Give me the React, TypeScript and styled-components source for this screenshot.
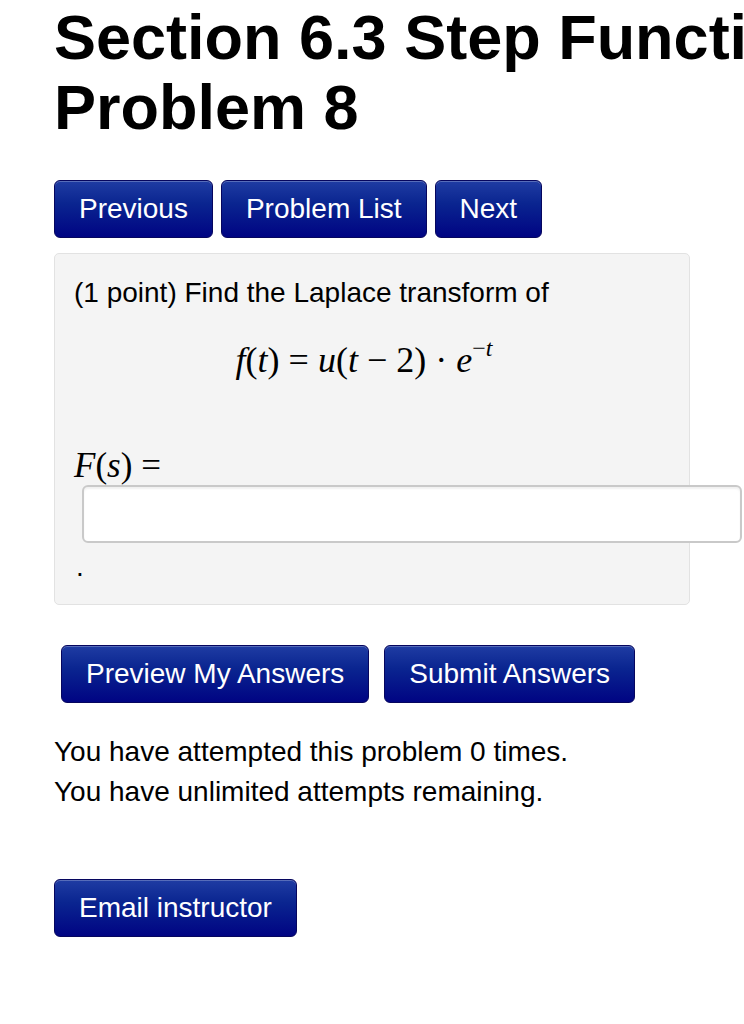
import styled, { createGlobalStyle } from "styled-components";

const GlobalStyle = createGlobalStyle`
  html, body {
    margin: 0;
    padding: 0;
    background: #ffffff;
    overflow: hidden;
  }
  body {
    font-family: "Liberation Sans", Arial, sans-serif;
    color: #000;
  }
`;

const Page = styled.div`
  width: 744px;
  height: 1024px;
  padding: 2px 0 0 54px;
  box-sizing: border-box;
`;

const Title = styled.h1`
  margin: 0;
  font-size: 63px;
  font-weight: bold;
  line-height: 70px;
  white-space: nowrap;
`;

const ButtonRow = styled.div<{ gap: number; indent?: number }>`
  display: flex;
  gap: ${(p) => p.gap}px;
  margin-left: ${(p) => p.indent || 0}px;
`;

const NavButton = styled.button`
  height: 58px;
  padding: 0 24px;
  font-family: "Liberation Sans", Arial, sans-serif;
  font-size: 28px;
  color: #ffffff;
  border: 1px solid #06065e;
  border-radius: 6px;
  background: linear-gradient(#1f3ca3 0%, #0a2590 40%, #000483 100%);
  box-shadow: inset 0 1px 0 rgba(255, 255, 255, 0.25);
  cursor: pointer;
`;

const TopNav = styled(ButtonRow)`
  margin-top: 38px;
`;

const ProblemBox = styled.div`
  margin-top: 15px;
  width: 636px;
  box-sizing: border-box;
  padding: 19px 19px 17px 19px;
  background: #f4f4f4;
  border: 1px solid #e2e2e2;
  border-radius: 5px;
`;

const Text = styled.p`
  margin: 0;
  font-size: 28px;
  line-height: 40px;
`;

const MathDisplay = styled.div`
  margin-top: 26px;
  text-align: center;
  font-family: "Liberation Serif", "Times New Roman", serif;
  font-size: 36px;
  line-height: 42px;
  padding-right: 16px;
  i {
    font-style: italic;
  }
  sup {
    font-size: 24px;
    vertical-align: 16px;
    line-height: 0;
  }
`;

const Op = styled.span`
  margin: 0 9px;
`;

const MathLabel = styled.div`
  margin-top: 66px;
  font-family: "Liberation Serif", "Times New Roman", serif;
  font-size: 35px;
  line-height: 38px;
  i {
    font-style: italic;
  }
`;

const AnswerInput = styled.input`
  display: block;
  margin: 0 0 0 8px;
  width: 660px;
  height: 58px;
  box-sizing: border-box;
  border: 2px solid #c9c9c9;
  border-radius: 6px;
  background: #ffffff;
  box-shadow: inset 0 2px 2px rgba(0, 0, 0, 0.06);
  font-size: 24px;
  padding: 0 10px;
`;

const Dot = styled(Text)`
  margin-top: 4px;
  padding-left: 2px;
`;

const SubmitRow = styled(ButtonRow)`
  margin-top: 40px;
`;

const Attempts = styled.div`
  margin-top: 29px;
`;

const EmailRow = styled.div`
  margin-top: 67px;
`;

function App() {
  return (
    <>
      <GlobalStyle />
      <Page>
        <Title>
          Section 6.3 Step Functions
          <br />
          Problem 8
        </Title>

        <TopNav gap={8}>
          <NavButton>Previous</NavButton>
          <NavButton>Problem List</NavButton>
          <NavButton>Next</NavButton>
        </TopNav>

        <ProblemBox>
          <Text>(1 point) Find the Laplace transform of</Text>
          <MathDisplay>
            <i>f</i>(<i>t</i>)<Op>=</Op>
            <i>u</i>(<i>t</i>
            <Op>−</Op>2)<Op>·</Op>
            <i>e</i>
            <sup>
              −<i>t</i>
            </sup>
          </MathDisplay>
          <MathLabel>
            <i>F</i>(<i>s</i>)<Op>=</Op>
          </MathLabel>
          <AnswerInput type="text" />
          <Dot>.</Dot>
        </ProblemBox>

        <SubmitRow gap={15} indent={7}>
          <NavButton>Preview My Answers</NavButton>
          <NavButton>Submit Answers</NavButton>
        </SubmitRow>

        <Attempts>
          <Text>You have attempted this problem 0 times.</Text>
          <Text>You have unlimited attempts remaining.</Text>
        </Attempts>

        <EmailRow>
          <NavButton>Email instructor</NavButton>
        </EmailRow>
      </Page>
    </>
  );
}

export default App;
